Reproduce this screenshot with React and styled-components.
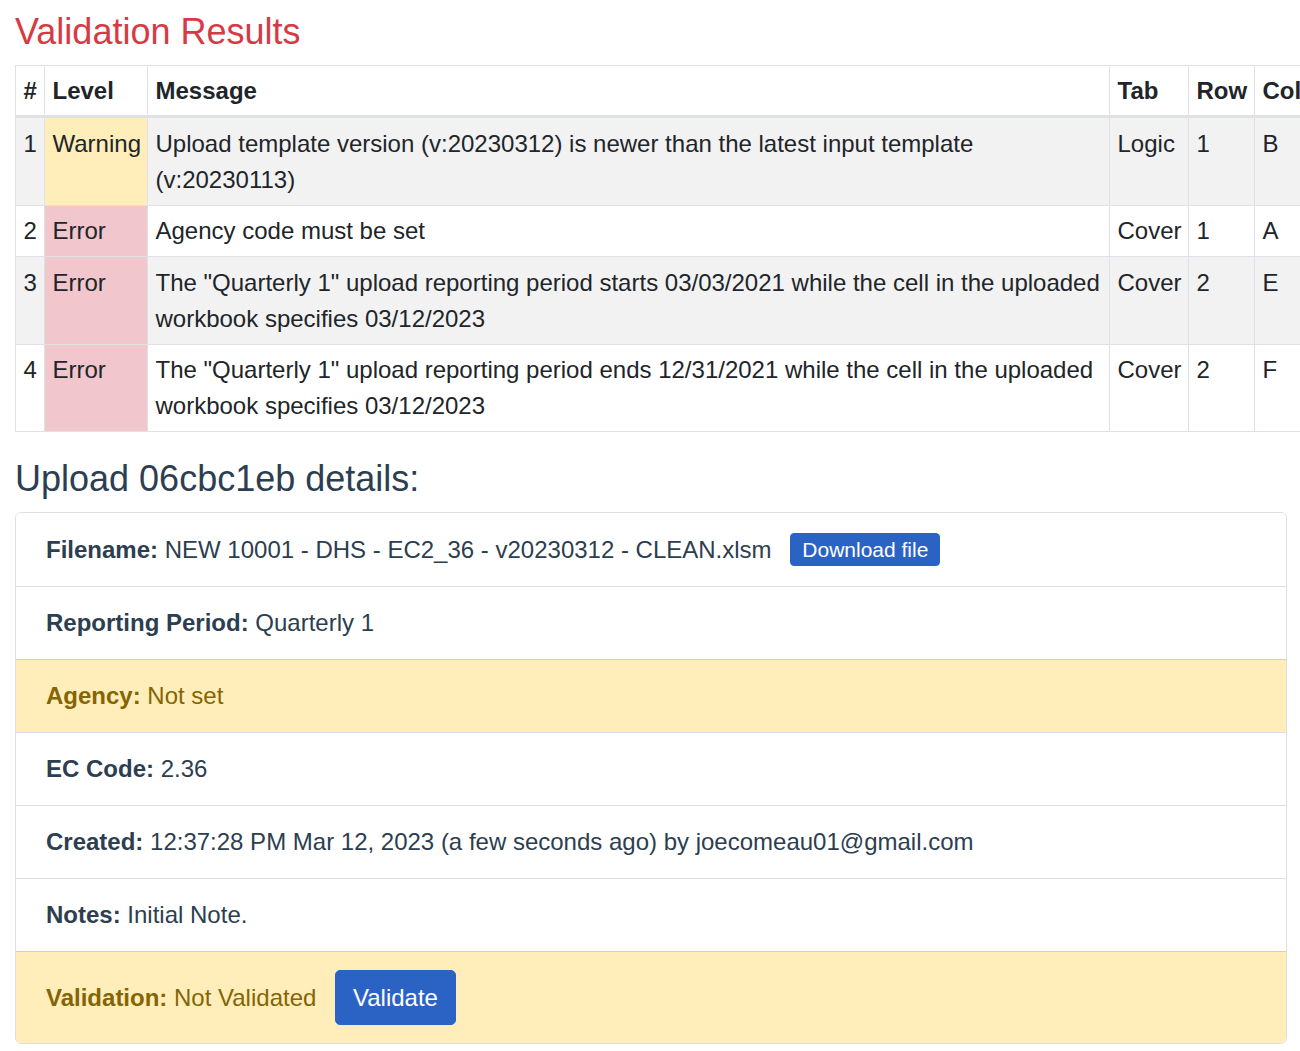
import React from "react";
import styled, { createGlobalStyle } from "styled-components";

const GlobalStyle = createGlobalStyle`
  html, body {
    margin: 0;
    padding: 0;
    overflow: hidden;
    background: #fff;
  }
  body {
    font-family: "Liberation Sans", Arial, sans-serif;
    font-size: 24px;
    line-height: 36px;
    color: #212529;
  }
  * { box-sizing: border-box; }
`;

const Page = styled.div`
  padding: 10px 13px 0 15px;
  width: 1300px;
`;

const Heading = styled.h4`
  margin: 0 0 12px;
  font-size: 36px;
  line-height: 43px;
  font-weight: 400;
  color: ${(p) => p.color || "#2c3e50"};
`;

const Table = styled.table`
  border-collapse: collapse;
  table-layout: fixed;
  width: 1310px;
  margin-bottom: 25px;
  color: #212529;

  th, td {
    border: 1px solid #dee2e6;
    padding: 7.5px 7.5px 7px;
    text-align: left;
    vertical-align: top;
  }
  thead th {
    font-weight: 700;
    border-bottom: 3px solid #dee2e6;
    padding: 6.5px 7.5px;
  }
`;

const Row = styled.tr`
  background: ${(p) => (p.striped ? "#f2f2f2" : "#fff")};
`;

const LevelCell = styled.td`
  background: ${(p) => (p.level === "Warning" ? "#ffeeba" : "#f1c6cc")};
`;

const Card = styled.ul`
  list-style: none;
  margin: 0;
  padding: 0;
  width: 1272px;
  border: 1px solid rgba(0, 0, 0, 0.125);
  border-radius: 6px;
  overflow: hidden;
`;

const Item = styled.li`
  display: flex;
  align-items: center;
  padding: 18px 30px;
  min-height: 73px;
  color: ${(p) => (p.warning ? "#856404" : "#2c3e50")};
  background: ${(p) => (p.warning ? "#ffeeba" : "#fff")};
  border-top: ${(p) => (p.first ? "none" : "1px solid rgba(0, 0, 0, 0.125)")};
  white-space: pre;

  b { font-weight: 700; }
`;

const Button = styled.button`
  margin-left: 12px;
  font-family: inherit;
  color: #fff;
  background: #2b63c5;
  border: 1.5px solid #2b63c5;
  border-radius: ${(p) => (p.small ? "4px" : "5px")};
  font-size: ${(p) => (p.small ? "21px" : "24px")};
  line-height: ${(p) => (p.small ? "31.5px" : "36px")};
  padding: ${(p) => (p.small ? "0 11px" : "8.5px 17px")};
  cursor: pointer;
`;

const results = [
  {
    level: "Warning",
    message:
      "Upload template version (v:20230312) is newer than the latest input template (v:20230113)",
    tab: "Logic",
    row: "1",
    col: "B",
  },
  { level: "Error", message: "Agency code must be set", tab: "Cover", row: "1", col: "A" },
  {
    level: "Error",
    message:
      'The "Quarterly 1" upload reporting period starts 03/03/2021 while the cell in the uploaded workbook specifies 03/12/2023',
    tab: "Cover",
    row: "2",
    col: "E",
  },
  {
    level: "Error",
    message:
      'The "Quarterly 1" upload reporting period ends 12/31/2021 while the cell in the uploaded workbook specifies 03/12/2023',
    tab: "Cover",
    row: "2",
    col: "F",
  },
];

export default function App() {
  return (
    <Page>
      <GlobalStyle />
      <Heading color="#d63a45">Validation Results</Heading>
      <Table>
        <colgroup>
          <col style={{ width: 29 }} />
          <col style={{ width: 103 }} />
          <col style={{ width: 962 }} />
          <col style={{ width: 79 }} />
          <col style={{ width: 66 }} />
          <col style={{ width: 71 }} />
        </colgroup>
        <thead>
          <tr>
            <th>#</th>
            <th>Level</th>
            <th>Message</th>
            <th>Tab</th>
            <th>Row</th>
            <th>Col</th>
          </tr>
        </thead>
        <tbody>
          {results.map((r, i) => (
            <Row key={i} striped={i % 2 === 0}>
              <td>{i + 1}</td>
              <LevelCell level={r.level}>{r.level}</LevelCell>
              <td>{r.message}</td>
              <td>{r.tab}</td>
              <td>{r.row}</td>
              <td>{r.col}</td>
            </Row>
          ))}
        </tbody>
      </Table>

      <Heading>Upload 06cbc1eb details:</Heading>
      <Card>
        <Item first>
          <b>Filename:</b> NEW 10001 - DHS - EC2_36 - v20230312 - CLEAN.xlsm{" "}
          <Button small>Download file</Button>
        </Item>
        <Item>
          <b>Reporting Period:</b> Quarterly 1
        </Item>
        <Item warning>
          <b>Agency:</b> Not set
        </Item>
        <Item>
          <b>EC Code:</b> 2.36
        </Item>
        <Item>
          <b>Created:</b> 12:37:28 PM Mar 12, 2023 (a few seconds ago) by joecomeau01@gmail.com
        </Item>
        <Item>
          <b>Notes:</b> Initial Note.
        </Item>
        <Item warning>
          <b>Validation:</b> Not Validated <Button>Validate</Button>
        </Item>
      </Card>
    </Page>
  );
}
